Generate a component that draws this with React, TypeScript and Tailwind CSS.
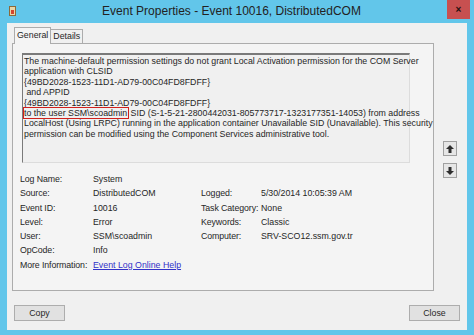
import { ReactNode } from 'react';

const font = { fontFamily: '"Liberation Sans", Arial, sans-serif' };

function ArrowButton({ down }: { down?: boolean }) {
  return (
    <div className="w-[14px] h-[15px] border border-[#a0a0a0] bg-[#e6e6e6] flex items-center justify-center">
      <svg width="8" height="8" viewBox="0 0 8 8" className={down ? 'rotate-180' : ''}>
        <path d="M4 0 L8 4 L5.5 4 L5.5 8 L2.5 8 L2.5 4 L0 4 Z" fill="#2e2e2e" />
      </svg>
    </div>
  );
}

function Field({ label, children }: { label: string; children: ReactNode }) {
  return (
    <>
      <div className="whitespace-nowrap tracking-[-0.1px]">{label}</div>
      <div>{children}</div>
    </>
  );
}

export default function App() {
  return (
    <div style={font} className="w-[474px] h-[335px] bg-[#62c6ea] flex flex-col text-[#262626] overflow-hidden">
      {/* title bar */}
      <div className="h-[23px] flex items-start relative">
        <div className="ml-[9px] mt-[6px] w-[7px] h-[10px] bg-[#e9d6a8] border border-[#8a6a3a] relative">
          <div className="absolute left-[1px] top-[3px] w-[3px] h-[4px] bg-[#d2452f]" />
        </div>
        <div className="flex-1 text-center text-[12px] leading-[22px] text-[#222]">Event Properties - Event 10016, DistributedCOM</div>
        <div className="w-[23px] h-[19px] bg-[#c75050] mr-[4px] flex items-center justify-center text-[10px] font-bold text-[#2a1010]">×</div>
      </div>

      {/* client */}
      <div className="mx-[7px] h-[307px] bg-[#f0f0f0] flex flex-col px-[5px] pt-[4px] text-[8.8px]">
        <div className="flex items-end h-[16px] pl-[2px]">
          <div className="h-[17px] px-[2px] border border-b-0 border-[#acacac] bg-[#f4f4f4] leading-[15px] relative z-10 -mb-[1px]">General</div>
          <div className="h-[14px] px-[2px] border border-b-0 border-l-0 border-[#acacac] bg-[#f0f0f0] leading-[13px]">Details</div>
        </div>
        <div className="flex">
          <div className="w-[422px] h-[248px] border border-[#acacac] bg-[#f4f4f4] pt-[9px] flex flex-col">
            <div className="ml-[9px] w-[388px] h-[110px] border-t-2 border-l border-[#7a7a7a] border-r border-b border-r-[#dcdcdc] border-b-[#dcdcdc] bg-[#f0f0f0] pl-[1px] pt-[1px] leading-[10.4px] whitespace-nowrap">
              <div>The machine-default permission settings do not grant Local Activation permission for the COM Server</div>
              <div>application with CLSID</div>
              <div>{'{49BD2028-1523-11D1-AD79-00C04FD8FDFF}'}</div>
              <div>&nbsp;and APPID</div>
              <div>{'{49BD2028-1523-11D1-AD79-00C04FD8FDFF}'}</div>
              <div>
                <span className="outline outline-[1.5px] outline-[#d0201c] pr-[1px]">to the user SSM\scoadmin</span> SID (S-1-5-21-2800442031-805773717-1323177351-14053) from address
              </div>
              <div>LocalHost (Using LRPC) running in the application container Unavailable SID (Unavailable). This security</div>
              <div>permission can be modified using the Component Services administrative tool.</div>
            </div>
            <div className="mt-[9px] ml-[7px] grid grid-cols-[73px_108px_60px_1fr] leading-[14.3px]">
              <Field label="Log Name:">System</Field>
              <div /><div />
              <Field label="Source:">DistributedCOM</Field>
              <Field label="Logged:">5/30/2014 10:05:39 AM</Field>
              <Field label="Event ID:">10016</Field>
              <Field label="Task Category:">None</Field>
              <Field label="Level:">Error</Field>
              <Field label="Keywords:">Classic</Field>
              <Field label="User:">SSM\scoadmin</Field>
              <Field label="Computer:">SRV-SCO12.ssm.gov.tr</Field>
              <Field label="OpCode:">Info</Field>
              <div /><div />
              <Field label="More Information:">
                <span className="text-[#3232c8] underline">Event Log Online Help</span>
              </Field>
            </div>
          </div>
          <div className="flex flex-col ml-[9px] pt-[98px] gap-[7px]">
            <ArrowButton />
            <ArrowButton down />
          </div>
        </div>
        <div className="flex justify-between mt-[14px] px-[2px]">
          <div className="w-[51px] h-[16px] border border-[#adadad] bg-[#e1e1e1] text-center leading-[14px]">Copy</div>
          <div className="w-[51px] h-[16px] border border-[#adadad] bg-[#e1e1e1] text-center leading-[14px]">Close</div>
        </div>
      </div>
    </div>
  );
}
